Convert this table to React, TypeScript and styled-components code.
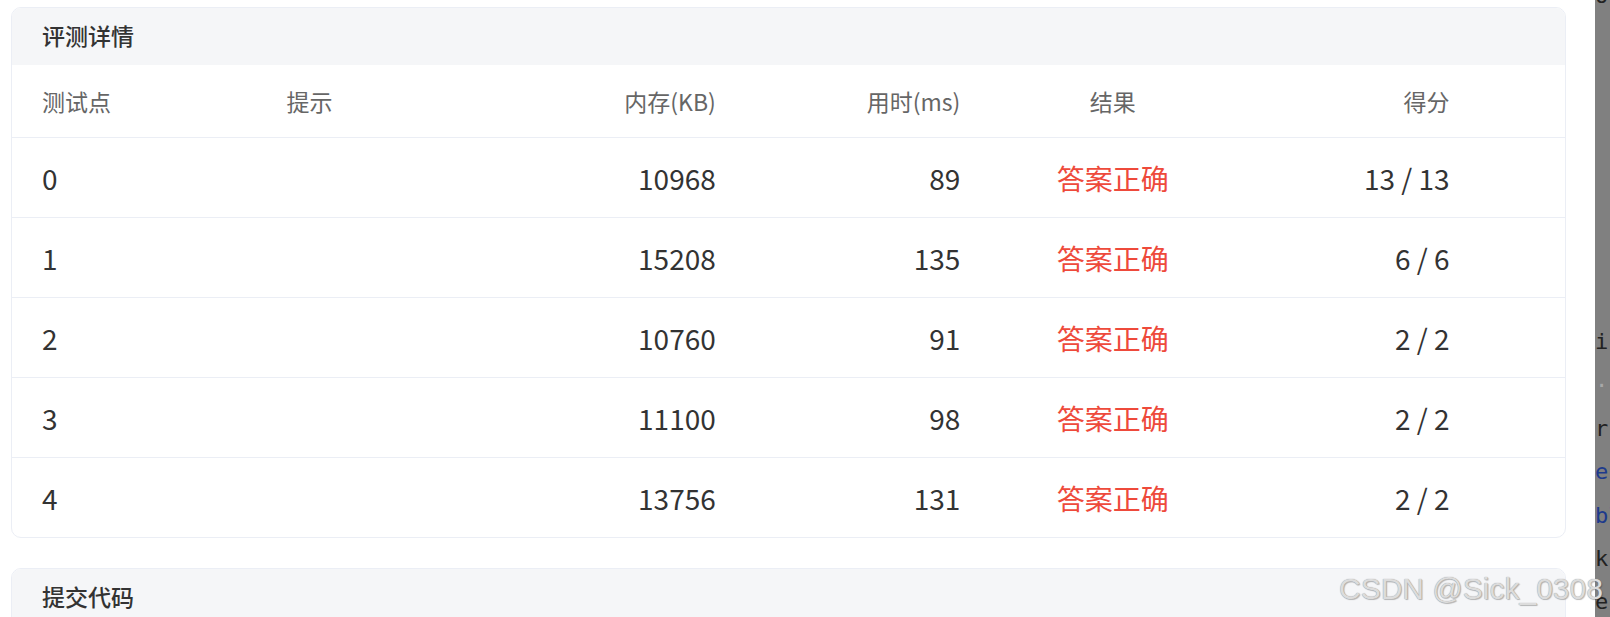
import React from "react";
import styled, { createGlobalStyle } from "styled-components";

const Global = createGlobalStyle`
  html, body { margin: 0; padding: 0; background: #ffffff; }
  body {
    width: 1610px;
    height: 617px;
    overflow: hidden;
    font-family: "Noto Sans CJK SC", "Noto Sans", sans-serif;
  }
`;

const Page = styled.div`
  display: flex;
  width: 1610px;
  height: 617px;
  overflow: hidden;
  position: relative;
`;

const Main = styled.main`
  flex: 0 0 1595px;
  box-sizing: border-box;
  padding: 7px 29px 0 11px;
  display: flex;
  flex-direction: column;
  gap: 30px;
`;

const Card = styled.section`
  border: 1px solid #ebeef5;
  border-radius: 10px;
  overflow: hidden;
  background: #ffffff;
  flex-shrink: 0;
`;

const CardTitle = styled.div`
  height: 57px;
  box-sizing: border-box;
  display: flex;
  align-items: center;
  padding: 0 30px 3px;
  background: #f5f6f8;
  color: #333333;
  font-size: 23px;
  font-weight: 500;
`;

const Row = styled.div<{ $head?: boolean }>`
  display: grid;
  grid-template-columns: repeat(6, 244.6px) 1fr;
  height: ${(p) => (p.$head ? "72px" : "79px")};
  border-top: ${(p) => (p.$head ? "none" : "1px solid #ebeef5")};
  font-size: ${(p) => (p.$head ? "23px" : "28px")};
  color: ${(p) => (p.$head ? "#666666" : "#333333")};
`;

const Cell = styled.div<{ $align?: "left" | "right" | "center"; $ok?: boolean }>`
  display: flex;
  align-items: center;
  padding: 0 30px;
  justify-content: ${(p) =>
    p.$align === "right" ? "flex-end" : p.$align === "center" ? "center" : "flex-start"};
  color: ${(p) => (p.$ok ? "#ee4a3b" : "inherit")};
  white-space: nowrap;
`;

const Strip = styled.aside`
  flex: 1 0 auto;
  background: #808080;
  overflow: hidden;
  display: flex;
  flex-direction: column;
  font-family: "DejaVu Sans Mono", "Liberation Mono", monospace;
  font-size: 22px;
`;

const CodeLines = styled.div`
  margin-top: -26px;
  display: flex;
  flex-direction: column;
`;

const CodeLine = styled.div<{ $tone?: "blue" | "dim" }>`
  height: 43.3px;
  line-height: 43.3px;
  white-space: pre;
  color: ${(p) => (p.$tone === "blue" ? "#1d3a8c" : p.$tone === "dim" ? "#a8a8a8" : "#222222")};
`;

const Watermark = styled.div`
  position: absolute;
  left: 1339px;
  top: 574px;
  font-family: "Liberation Sans", Arial, sans-serif;
  font-size: 30px;
  line-height: 30px;
  color: #dcdcdc;
  text-shadow: 0 0 1px #8a8a8a, 1px 1px 1px rgba(0, 0, 0, 0.25);
  white-space: nowrap;
  pointer-events: none;
`;

type Case = { id: number; mem: number; time: number; score: string };

const cases: Case[] = [
  { id: 0, mem: 10968, time: 89, score: "13 / 13" },
  { id: 1, mem: 15208, time: 135, score: "6 / 6" },
  { id: 2, mem: 10760, time: 91, score: "2 / 2" },
  { id: 3, mem: 11100, time: 98, score: "2 / 2" },
  { id: 4, mem: 13756, time: 131, score: "2 / 2" },
];

const codeLines: { t: string; tone?: "blue" | "dim" }[] = [
  { t: "o" },
  { t: "" },
  { t: "" },
  { t: "" },
  { t: "" },
  { t: "" },
  { t: "" },
  { t: "" },
  { t: "i" },
  { t: "·", tone: "dim" },
  { t: "r" },
  { t: "e", tone: "blue" },
  { t: "bl", tone: "blue" },
  { t: "k" },
  { t: "e" },
];

export default function App() {
  return (
    <>
      <Global />
      <Page>
        <Main>
          <Card>
            <CardTitle>评测详情</CardTitle>
            <Row $head>
              <Cell>测试点</Cell>
              <Cell>提示</Cell>
              <Cell $align="right">内存(KB)</Cell>
              <Cell $align="right">用时(ms)</Cell>
              <Cell $align="center">结果</Cell>
              <Cell $align="right">得分</Cell>
              <Cell />
            </Row>
            {cases.map((c) => (
              <Row key={c.id}>
                <Cell>{c.id}</Cell>
                <Cell />
                <Cell $align="right">{c.mem}</Cell>
                <Cell $align="right">{c.time}</Cell>
                <Cell $align="center" $ok>
                  答案正确
                </Cell>
                <Cell $align="right">{c.score}</Cell>
                <Cell />
              </Row>
            ))}
          </Card>
          <Card>
            <CardTitle>提交代码</CardTitle>
          </Card>
        </Main>
        <Strip>
          <CodeLines>
            {codeLines.map((l, i) => (
              <CodeLine key={i} $tone={l.tone}>
                {l.t}
              </CodeLine>
            ))}
          </CodeLines>
        </Strip>
        <Watermark>CSDN @Sick_0308</Watermark>
      </Page>
    </>
  );
}
